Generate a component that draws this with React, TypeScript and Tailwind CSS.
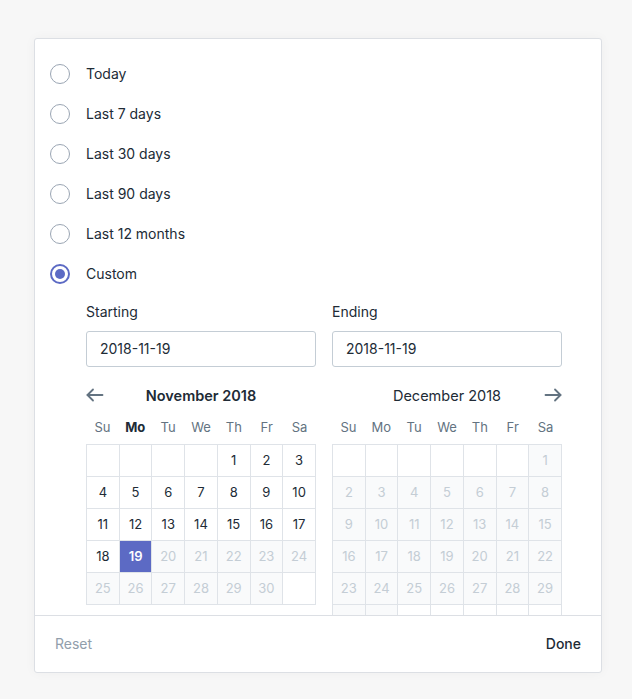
import React from "react";

const FONT = { fontFamily: "Inter, 'Noto Sans', sans-serif" };
const WEEK = ["Su", "Mo", "Tu", "We", "Th", "Fr", "Sa"];

type Cell = { d: number | null; state: "empty" | "active" | "disabled" | "selected" };

function buildMonth(lead: number, days: number, f: (d: number) => Cell["state"]): Cell[][] {
  const cells: Cell[] = [];
  for (let i = 0; i < lead; i++) cells.push({ d: null, state: "empty" });
  for (let d = 1; d <= days; d++) cells.push({ d, state: f(d) });
  while (cells.length % 7 !== 0) cells.push({ d: null, state: "empty" });
  const rows: Cell[][] = [];
  for (let i = 0; i < cells.length; i += 7) rows.push(cells.slice(i, i + 7));
  return rows;
}

const nov = buildMonth(4, 30, (d) => (d === 19 ? "selected" : d > 19 ? "disabled" : "active"));
const dec = buildMonth(6, 31, () => "disabled");

function Arrow({ dir }: { dir: "left" | "right" }) {
  return (
    <svg width="18" height="14" viewBox="0 0 18 14" fill="none" stroke="#637381" strokeWidth="1.8" strokeLinecap="round" strokeLinejoin="round" className="-mt-[3px]">
      {dir === "left" ? (
        <>
          <path d="M16.5 7H1.5" />
          <path d="M7 1.5L1.5 7L7 12.5" />
        </>
      ) : (
        <>
          <path d="M1.5 7H16.5" />
          <path d="M11 1.5L16.5 7L11 12.5" />
        </>
      )}
    </svg>
  );
}

function Month({ title, rows, bold, left, right, boldDay }: { title: string; rows: Cell[][]; bold?: boolean; left?: boolean; right?: boolean; boldDay?: number }) {
  return (
    <div className="w-[230px]">
      <div className="mt-[17px] grid h-6 grid-cols-[24px_1fr_24px] items-center">
        <div className="flex items-center justify-start">{left && <Arrow dir="left" />}</div>
        <div className={`text-center text-[14.5px] text-[#212b36] ${bold ? "font-semibold" : "font-normal"}`}>{title}</div>
        <div className="flex items-center justify-end">{right && <Arrow dir="right" />}</div>
      </div>
      <div className="mt-[4px] grid h-8 grid-cols-7 items-center">
        {WEEK.map((w, i) => (
          <div key={w} className={`text-center text-[13px] ${boldDay === i ? "font-bold text-[#212b36]" : "text-[#637381]"}`}>
            {w}
          </div>
        ))}
      </div>
      <table className="w-[230px] table-fixed border-collapse">
        <tbody>
          {rows.map((r, ri) => (
            <tr key={ri}>
              {r.map((c, ci) => {
                let cls = "bg-white";
                if (c.state === "active") cls = "bg-white text-[#212b36]";
                if (c.state === "disabled") cls = "bg-[#f9fafb] text-[#c4cdd5]";
                if (c.state === "selected") cls = "bg-[#5c6ac4] text-white font-semibold";
                return (
                  <td key={ci} className={`h-8 border border-[#dfe3e8] p-0 text-center text-[13px] ${cls}`}>
                    {c.d ?? ""}
                  </td>
                );
              })}
            </tr>
          ))}
        </tbody>
      </table>
    </div>
  );
}

function Radio({ checked }: { checked?: boolean }) {
  if (checked)
    return (
      <div className="flex h-5 w-5 items-center justify-center rounded-full border-2 border-[#5c6ac4] bg-white">
        <div className="h-[10px] w-[10px] rounded-full bg-[#5c6ac4]" />
      </div>
    );
  return <div className="h-5 w-5 rounded-full border border-[#9aa5b3] bg-white" />;
}

export default function App() {
  const options = ["Today", "Last 7 days", "Last 30 days", "Last 90 days", "Last 12 months"];
  return (
    <div className="min-h-[699px] bg-[#f7f7f7] pl-[34px] pt-[38px]" style={FONT}>
      <div className="flex w-[568px] flex-col rounded-[3px] border border-[#dcdfe4] bg-white shadow-[0_0_12px_rgba(0,0,0,0.04)]">
        <div className="h-[576px] overflow-hidden pl-[15px] pt-[15px]">
          {options.map((o) => (
            <div key={o} className="flex h-10 items-center gap-4">
              <Radio />
              <span className="text-sm text-[#212b36]">{o}</span>
            </div>
          ))}
          <div className="flex h-10 items-center gap-4">
            <Radio checked />
            <span className="text-sm text-[#212b36]">Custom</span>
          </div>
          <div className="ml-9 w-[476px]">
            <div className="mt-2 flex gap-4">
              <div className="w-[230px]">
                <div className="h-5 text-sm leading-5 text-[#212b36]">Starting</div>
                <div className="mt-[9px] flex h-9 items-center rounded-[3px] border border-[#c4cdd5] px-[13px] text-sm text-[#212b36]">2018-11-19</div>
              </div>
              <div className="w-[230px]">
                <div className="h-5 text-sm leading-5 text-[#212b36]">Ending</div>
                <div className="mt-[9px] flex h-9 items-center rounded-[3px] border border-[#c4cdd5] px-[13px] text-sm text-[#212b36]">2018-11-19</div>
              </div>
            </div>
            <div className="flex gap-4">
              <Month title="November 2018" rows={nov} bold left boldDay={1} />
              <Month title="December 2018" rows={dec} right />
            </div>
          </div>
        </div>
        <div className="flex h-[57px] items-center justify-between border-t border-[#dcdfe4] px-5">
          <span className="text-sm text-[#919eab]">Reset</span>
          <span className="text-sm font-medium text-[#212b36]">Done</span>
        </div>
      </div>
    </div>
  );
}
